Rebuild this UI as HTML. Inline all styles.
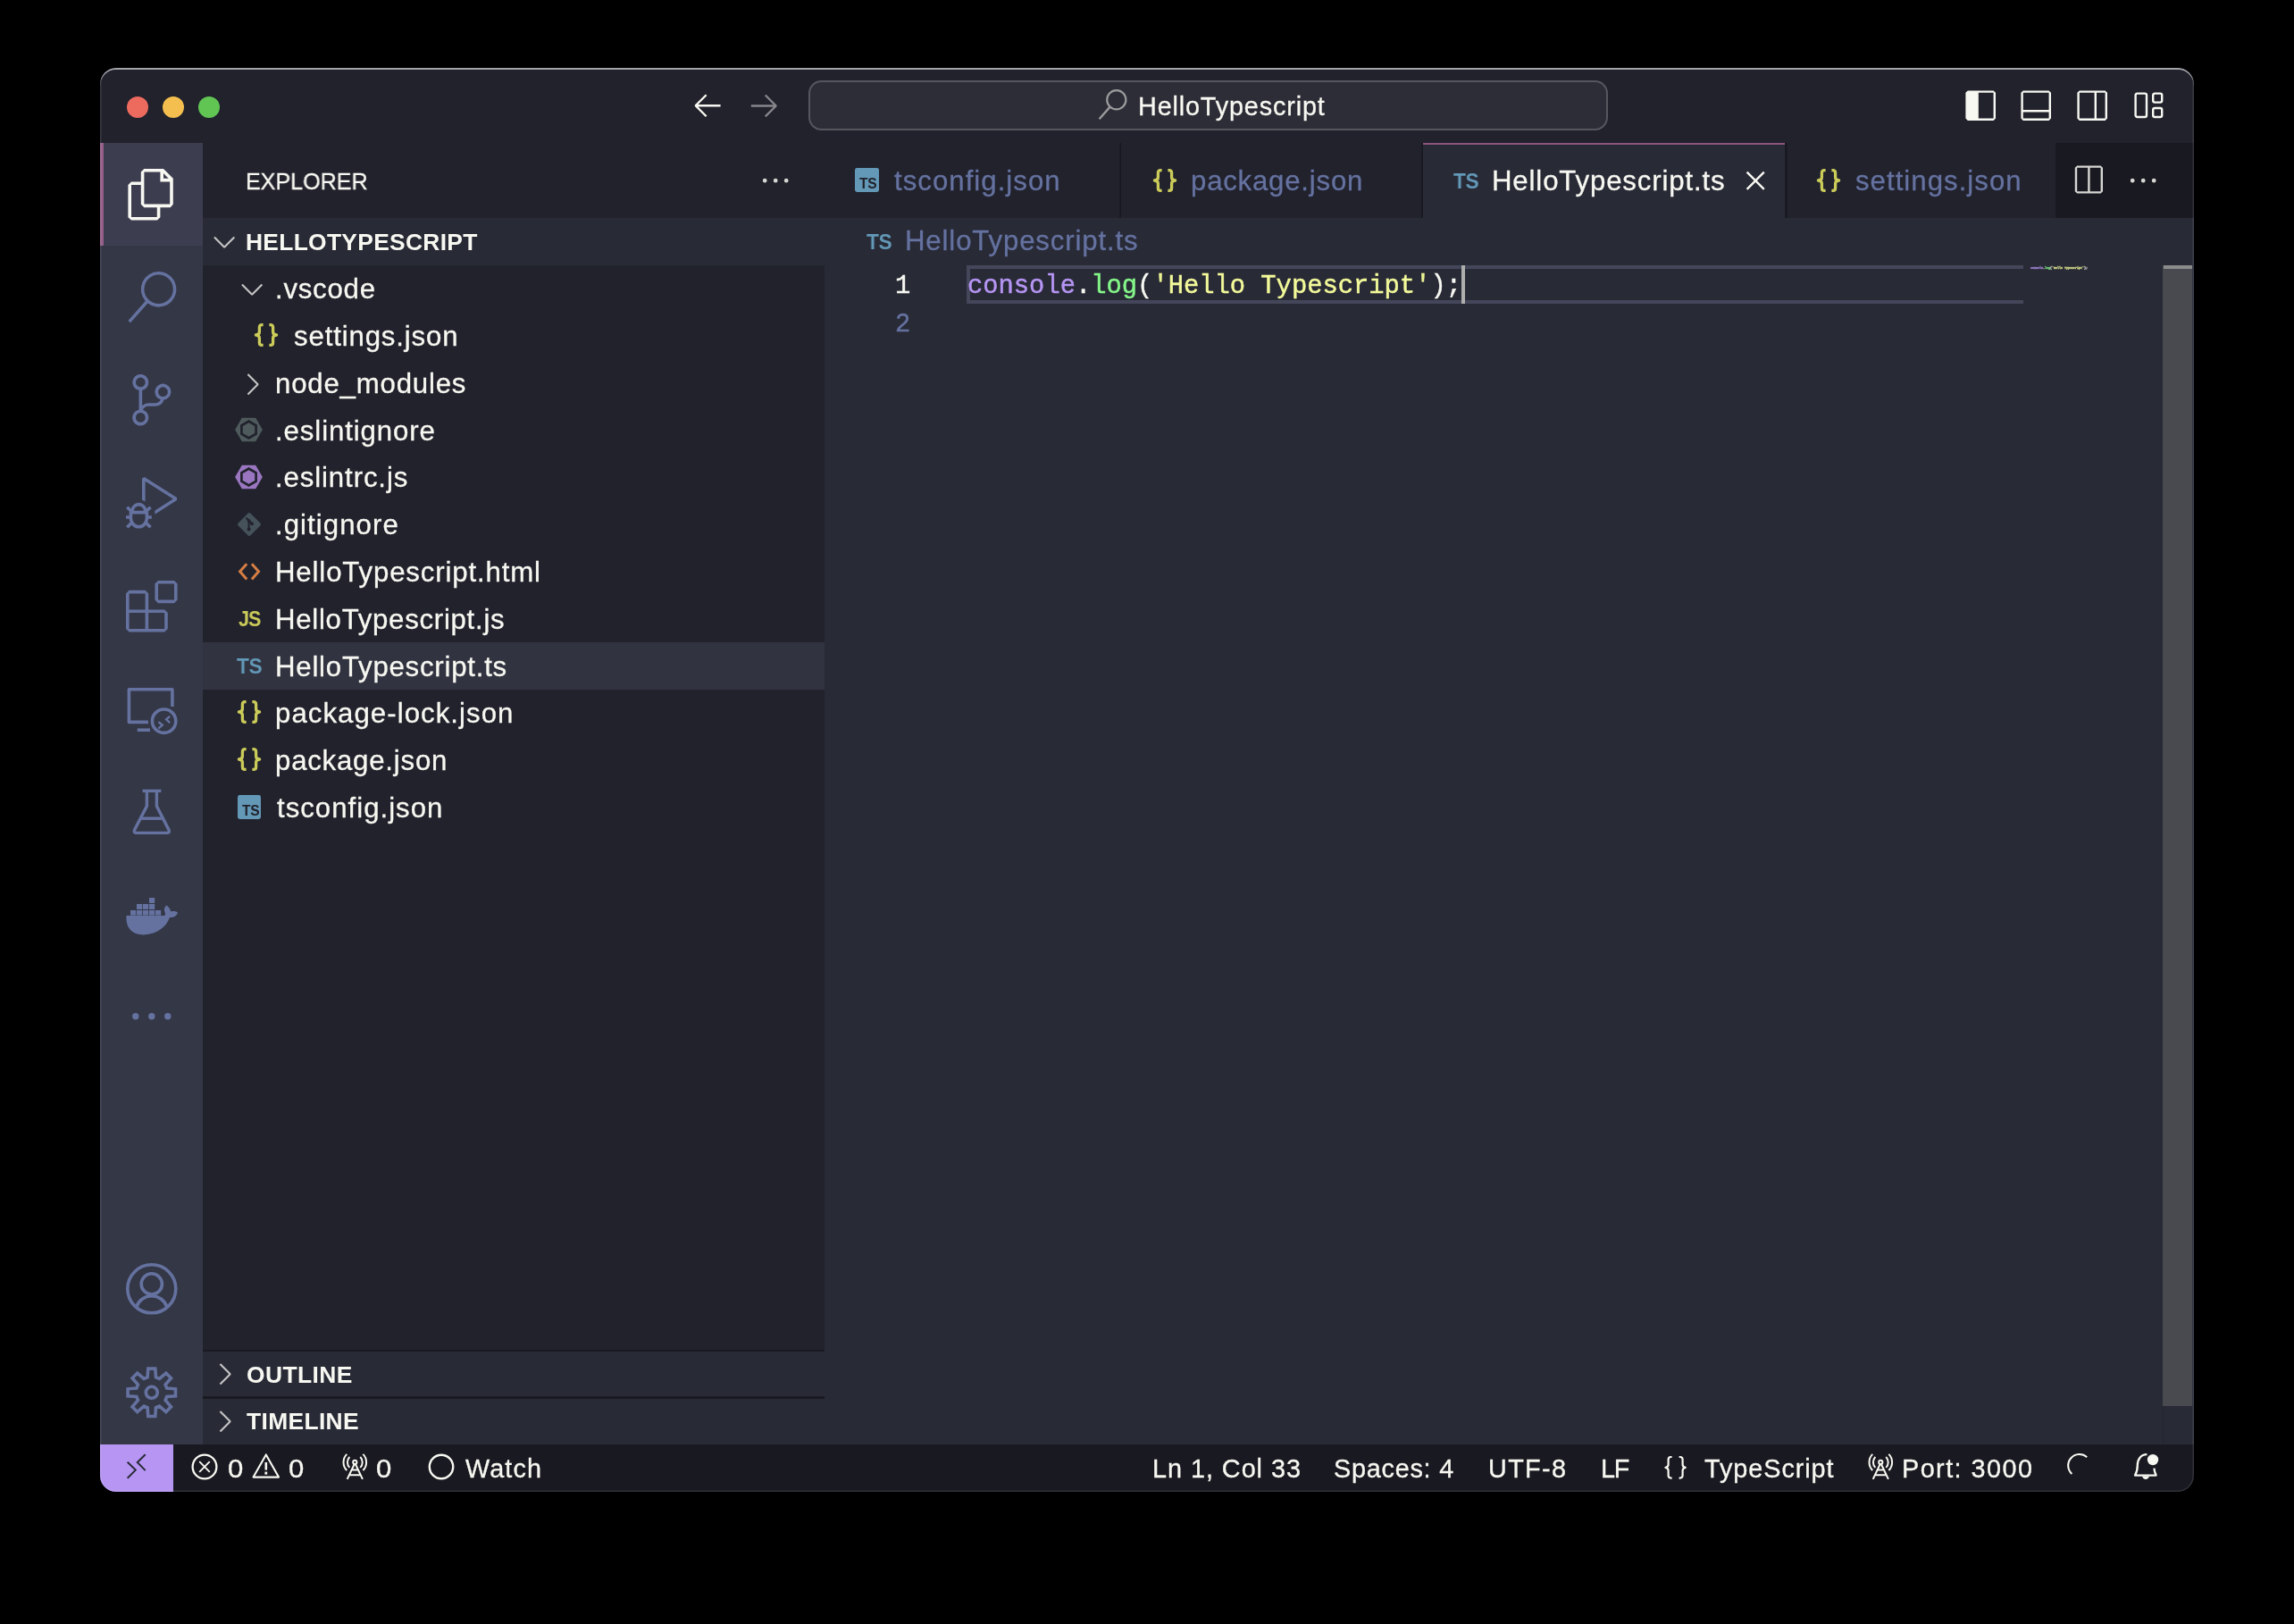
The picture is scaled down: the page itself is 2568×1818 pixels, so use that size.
<!DOCTYPE html>
<html>
<head>
<meta charset="utf-8">
<title>HelloTypescript.ts — HelloTypescript</title>
<style>
*{box-sizing:border-box;margin:0;padding:0}
html,body{width:2568px;height:1818px;background:#000;overflow:hidden}
body{font-family:"Liberation Sans",sans-serif;color:#f8f8f2;position:relative}
#win *{position:absolute}
#win{position:absolute;left:0;top:0;width:2568px;height:1818px;clip-path:inset(76px 112px 148px 112px round 18px)}
#titlebar{left:112px;top:76px;width:2344px;height:84px;background:#21222c}
#activity{left:112px;top:160px;width:115px;height:1457px;background:#343746}
#sidebar{left:227px;top:160px;width:696px;height:1457px;background:#21222c}
#editor{left:923px;top:160px;width:1533px;height:1457px;background:#282a36}
#status{left:112px;top:1617px;width:2344px;height:53px;background:#191a21}
svg{overflow:visible}
#win .t span{position:static}
.t{position:absolute;white-space:pre;line-height:0;margin-top:-0.3465em;font-size:31.2px;color:#f8f8f2;will-change:transform;-webkit-text-stroke:.3px}
.m{font-family:"Liberation Mono",monospace;font-size:28.8px;margin-top:-0.2667em;-webkit-text-stroke:.45px}
.s11{font-size:26.4px}
.s12{font-size:28.8px}
.b{font-weight:700;-webkit-text-stroke:0}
.dim{color:#6572a0}
.ic{position:absolute;width:38.4px;height:38.4px}
.ic24{position:absolute;width:57.6px;height:57.6px;fill:#6572a0}
</style>
</head>
<body>
<div id="win">
<div id="titlebar"></div>
<div id="activity"></div>
<div id="sidebar"></div>
<div id="editor"></div>
<div id="status"></div>
<!-- title bar -->
<div style="left:142px;top:108px;width:24px;height:24px;border-radius:50%;background:#ec6a5e"></div>
<div style="left:182px;top:108px;width:24px;height:24px;border-radius:50%;background:#f4bf4f"></div>
<div style="left:222px;top:108px;width:24px;height:24px;border-radius:50%;background:#61c554"></div>
<svg class="ic" style="left:773.4px;top:98.4px" viewBox="0 0 16 16"><path fill="#f8f8f2" d="M7 3.093l-5 5V8.8l5 5 .707-.707-4.146-4.147H14v-1H3.56L7.708 3.8 7 3.093z"/></svg>
<svg class="ic" style="left:836.4px;top:98.4px" viewBox="0 0 16 16"><path fill="#85858a" d="M9 13.887l5-5V8.18l-5-5-.707.707 4.146 4.147H2v1h10.44L8.292 13.18l.707.707z"/></svg>
<div style="left:905px;top:90px;width:895px;height:56px;border:2.4px solid #55565e;border-radius:14.4px;background:#2c2d36"></div>
<svg style="left:1228px;top:98px;width:36px;height:38px" viewBox="0 0 36 38"><circle cx="21.8" cy="13.8" r="10.6" fill="none" stroke="#9b9b9e" stroke-width="2.2"/><path d="M14.6 21.6L2.6 35.2" stroke="#9b9b9e" stroke-width="2.4" fill="none"/></svg>
<div class="t s12" style="left:1273.6px;top:129.2px;letter-spacing:0.85px;">HelloTypescript</div>
<svg class="ic" style="left:2197.6px;top:98.6px" viewBox="0 0 16 16"><path fill="#f8f8f2" d="M2 1L1 2v12l1 1h12l1-1V2l-1-1H2zm5 13V2h7v12H7z"/></svg>
<svg class="ic" style="left:2259.9px;top:98.6px" viewBox="0 0 16 16"><path fill="#f8f8f2" d="M2 1L1 2v12l1 1h12l1-1V2l-1-1H2zm0 9V2h12v8H2zm0 1h12v3H2v-3z"/></svg>
<svg class="ic" style="left:2322.6px;top:98.6px" viewBox="0 0 16 16"><path fill="#f8f8f2" d="M2 1L1 2v12l1 1h12l1-1V2l-1-1H2zm0 13V2h7v12H2zm8 0V2h4v12h-4z"/></svg>
<svg style="left:2388px;top:102px;width:34px;height:32px" viewBox="0 0 34 32"><g fill="none" stroke="#f8f8f2" stroke-width="2.4" stroke-linejoin="round"><rect x="2.6" y="2.6" width="12.4" height="26.4" rx="2"/><rect x="22.2" y="2.6" width="10" height="10" rx="2"/><rect x="22.2" y="19" width="10" height="10" rx="2"/></g></svg>
<!-- activity bar -->
<div style="left:112px;top:160px;width:115.2px;height:115.2px;background:#3d3d50"></div>
<div style="left:112px;top:160px;width:4.2px;height:115.2px;background:#955e89"></div>
<svg class="ic24" style="left:140.8px;top:188.8px;fill:#f8f8f2" viewBox="0 0 24 24"><path d="M17.5 0h-9L7 1.5V6H2.5L1 7.5v15.07L2.5 24h12.07L16 22.57V18h4.7l1.3-1.43V4.5L17.5 0zm0 2.12l2.38 2.38H17.5V2.12zm-3 20.38h-12v-15H7v9.07L8.5 18h6v4.5zm6-6h-12v-15H16V6h4.5v10.5z"/></svg>
<svg class="ic24" style="left:140.8px;top:304px" viewBox="0 0 24 24"><path d="M15.25 0a8.25 8.25 0 0 0-6.18 13.72L1 22.88l1.12 1 8.05-9.12A8.251 8.251 0 1 0 15.25.01V0zm0 15a6.75 6.75 0 1 1 0-13.5 6.75 6.75 0 0 1 0 13.5z"/></svg>
<svg class="ic24" style="left:140.8px;top:419.2px" viewBox="0 0 24 24"><path d="M21.007 8.222A3.738 3.738 0 0 0 15.045 5.2a3.737 3.737 0 0 0 1.156 6.583 2.988 2.988 0 0 1-2.668 1.67h-2.99a4.456 4.456 0 0 0-2.989 1.165V7.4a3.737 3.737 0 1 0-1.494 0v9.117a3.776 3.776 0 1 0 1.816.099 2.99 2.99 0 0 1 2.668-1.667h2.99a4.484 4.484 0 0 0 4.223-3.039 3.736 3.736 0 0 0 3.25-3.687zM4.565 3.738a2.242 2.242 0 1 1 4.484 0 2.242 2.242 0 0 1-4.484 0zm4.484 16.441a2.242 2.242 0 1 1-4.484 0 2.242 2.242 0 0 1 4.484 0zm8.221-9.715a2.242 2.242 0 1 1 0-4.485 2.242 2.242 0 0 1 0 4.485z"/></svg>
<svg class="ic24" style="left:140.8px;top:534.4px" viewBox="0 0 24 24"><path d="M10.94 13.5l-1.32 1.32a3.73 3.73 0 0 0-7.24 0L1.06 13.5 0 14.56l1.72 1.72-.22.22V18H0v1.5h1.5v.08c.077.489.214.966.41 1.42L0 22.94 1.06 24l1.65-1.65A4.308 4.308 0 0 0 6 24a4.31 4.31 0 0 0 3.29-1.65L10.94 24 12 22.94 10.09 21c.198-.464.336-.951.41-1.45v-.1H12V18h-1.5v-1.5l-.22-.22L12 14.56l-1.06-1.06zM6 13.5a2.25 2.25 0 0 1 2.25 2.25h-4.5A2.25 2.25 0 0 1 6 13.5zm3 6a3.33 3.33 0 0 1-3 3 3.33 3.33 0 0 1-3-3v-2.25h6v2.25zm14.76-9.9v1.26L13.5 17.37V15.6l8.5-5.37L9 2v9.46a5.07 5.07 0 0 0-1.5-.72V.63L8.64 0l15.12 9.6z"/></svg>
<svg class="ic24" style="left:140.8px;top:649.6px" viewBox="0 0 24 24"><path d="M13.5 1.5L15 0h7.5L24 1.5V9l-1.5 1.5H15L13.5 9V1.5zm1.5 0V9h7.5V1.5H15zM0 15V6l1.5-1.5H9L10.5 6v7.5H18l1.5 1.5v7.5L18 24H1.5L0 22.5V15zm9-1.5V6H1.5v7.5H9zM9 15H1.5v7.5H9V15zm1.5 7.5H18V15h-7.5v7.5z"/></svg>
<svg class="ic24" style="left:140.8px;top:764.8px;fill:none" viewBox="0 0 57.6 57.6"><g stroke="#6572a0" stroke-width="3.6" fill="none"><path d="M25 43.4H3.4V6.7H51.9V26" stroke-linejoin="round"/><path d="M12.7 52.2H27"/><circle cx="42.6" cy="42.2" r="13.2"/></g><g stroke="#6572a0" stroke-width="2.4" fill="none"><path d="M36.4 43.2L40.8 46.6L36.4 50.6"/><path d="M49.2 36.8L45 40.4L49.2 44.2"/></g></svg>
<svg class="ic24" style="left:140.8px;top:880px;fill:none" viewBox="0 0 57.6 57.6"><g stroke="#6572a0" stroke-width="3.4" fill="none" stroke-linejoin="round"><path d="M18.6 5.4H39.4"/><path d="M23.4 5.4V22.4L9.4 49.4Q8.6 52.4 11.6 52.4H46Q49 52.4 48.2 49.4L34.4 22.4V5.4"/><path d="M16.6 36.2H41.2"/></g></svg>
<svg class="ic24" style="left:140.8px;top:995.2px" viewBox="0 0 57.6 57.6"><g fill="#6572a0"><rect x="26" y="10" width="6.2" height="6"/><rect x="12" y="17" width="6.2" height="6"/><rect x="19" y="17" width="6.2" height="6"/><rect x="26" y="17" width="6.2" height="6"/><rect x="5" y="24" width="6.2" height="5.6"/><rect x="12" y="24" width="6.2" height="5.6"/><rect x="19" y="24" width="6.2" height="5.6"/><rect x="26" y="24" width="6.2" height="5.6"/><rect x="33" y="24" width="6.2" height="5.6"/><path d="M0.4 30H42.6C44.6 29.4 44.2 27.6 43.2 25.2C42.4 22.6 43.4 20 45.4 18.4C48.4 20.6 50 23.4 50 25.4C53 24.4 56.4 25 58 26.4C57 30 53.6 32.4 49 32C45.6 41.4 36 51 20 51.4C6 51.6 0 42.6 0.4 31.4Z"/></g></svg>
<svg class="ic24" style="left:140.8px;top:1110.4px" viewBox="0 0 57.6 57.6"><circle cx="10.8" cy="27.8" r="3.7"/><circle cx="28.8" cy="27.8" r="3.7"/><circle cx="46.8" cy="27.8" r="3.7"/></svg>
<svg class="ic24" style="left:140.8px;top:1414.4px;fill:none" viewBox="0 0 57.6 57.6"><g stroke="#6572a0" stroke-width="3.6" fill="none"><circle cx="28.8" cy="28.8" r="27"/><circle cx="28.8" cy="23.4" r="11.6"/><path d="M11.6 49.4A18 18 0 0 1 46 49.4"/></g></svg>
<svg class="ic24" style="left:140.8px;top:1529.6px;fill:none" viewBox="0 0 57.6 57.6"><g stroke="#6572a0" stroke-width="3.6" fill="none" stroke-linejoin="miter"><path d="M24.10 11.84 L24.81 2.10 L32.79 2.10 L33.50 11.84 L37.47 13.48 L44.86 7.10 L50.50 12.74 L44.12 20.13 L45.76 24.10 L55.50 24.81 L55.50 32.79 L45.76 33.50 L44.12 37.47 L50.50 44.86 L44.86 50.50 L37.47 44.12 L33.50 45.76 L32.79 55.50 L24.81 55.50 L24.10 45.76 L20.13 44.12 L12.74 50.50 L7.10 44.86 L13.48 37.47 L11.84 33.50 L2.10 32.79 L2.10 24.81 L11.84 24.10 L13.48 20.13 L7.10 12.74 L12.74 7.10 L20.13 13.48Z"/><circle cx="28.8" cy="28.8" r="6.5"/></g></svg>
<!-- sidebar -->
<div class="t s11" style="left:274.6px;top:212px;letter-spacing:0px;transform:scaleX(.95);transform-origin:0 0">EXPLORER</div>
<svg class="ic" style="left:848.6px;top:182.8px" viewBox="0 0 16 16"><path fill="#d6d6d3" d="M4 8a1 1 0 1 1-2 0 1 1 0 0 1 2 0zm5 0a1 1 0 1 1-2 0 1 1 0 0 1 2 0zm5 0a1 1 0 1 1-2 0 1 1 0 0 1 2 0z"/></svg>
<div style="left:227px;top:244px;width:696px;height:53px;background:#282a36"></div>
<svg class="ic" style="left:231.9px;top:251px" viewBox="0 0 16 16"><path fill="#c5c5c5" d="M7.976 10.072l4.357-4.357.62.618L8.284 11h-.618L3 6.333l.619-.618 4.357 4.357z"/></svg>
<div class="t s11 b" style="left:274.8px;top:279.8px;letter-spacing:0.3px;">HELLOTYPESCRIPT</div>
<div style="left:227px;top:719px;width:696px;height:52.8px;background:#313340"></div>
<div class="t " style="left:308.4px;top:334.9px;letter-spacing:0.75px;">.vscode</div>
<div class="t " style="left:328.6px;top:387.7px;letter-spacing:0.85px;">settings.json</div>
<div class="t " style="left:308.4px;top:440.5px;letter-spacing:0.8px;">node_modules</div>
<div class="t " style="left:308.4px;top:493.3px;letter-spacing:0.9px;">.eslintignore</div>
<div class="t " style="left:308.4px;top:546.1px;letter-spacing:0.88px;">.eslintrc.js</div>
<div class="t " style="left:308.4px;top:598.9px;letter-spacing:1.05px;">.gitignore</div>
<div class="t " style="left:308.4px;top:651.7px;letter-spacing:0.85px;">HelloTypescript.html</div>
<div class="t " style="left:308.4px;top:704.5px;letter-spacing:0.72px;">HelloTypescript.js</div>
<div class="t " style="left:308.4px;top:757.3px;letter-spacing:0.77px;">HelloTypescript.ts</div>
<div class="t " style="left:308.4px;top:810.1px;letter-spacing:1.05px;">package-lock.json</div>
<div class="t " style="left:308.4px;top:862.9px;letter-spacing:0.78px;">package.json</div>
<div class="t " style="left:309.6px;top:915.7px;letter-spacing:1.0px;">tsconfig.json</div>
<svg class="ic" style="left:263.1px;top:304.1px" viewBox="0 0 16 16"><path fill="#c5c5c5" d="M7.976 10.072l4.357-4.357.62.618L8.284 11h-.618L3 6.333l.619-.618 4.357 4.357z"/></svg>
<svg style="left:284.3px;top:360.99999999999994px;width:28px;height:28px" viewBox="0 0 28 28"><g fill="none" stroke="#cbcb5a" stroke-width="3.3" stroke-linejoin="round"><path d="M10.6 2.6H9.2Q6.4 2.6 6.4 5.6V10.4Q6.4 13.6 2.4 14Q6.4 14.4 6.4 17.6V22.4Q6.4 25.4 9.2 25.4H10.6"/><path d="M17.4 2.6H18.8Q21.6 2.6 21.6 5.6V10.4Q21.6 13.6 25.6 14Q21.6 14.4 21.6 17.6V22.4Q21.6 25.4 18.8 25.4H17.4"/></g></svg>
<svg class="ic" style="left:262.9px;top:410.6px" viewBox="0 0 16 16"><path fill="#c5c5c5" d="M10.072 8.024L5.715 3.667l.618-.62L11 7.716v.618L6.333 13l-.618-.619 4.357-4.357z"/></svg>
<svg style="left:263.1px;top:466.69999999999993px;width:31px;height:28px" viewBox="0 0 31 28"><polygon points="30.90,14.00 23.20,27.34 7.80,27.34 0.10,14.00 7.80,0.66 23.20,0.66" fill="#4f5a5d"/><polygon points="24.94,19.45 15.50,24.90 6.06,19.45 6.06,8.55 15.50,3.10 24.94,8.55" fill="#21222c"/><polygon points="22.25,17.90 15.50,21.80 8.75,17.90 8.75,10.10 15.50,6.20 22.25,10.10" fill="#4f5a5d"/></svg>
<svg style="left:263.1px;top:519.4999999999999px;width:31px;height:28px" viewBox="0 0 31 28"><polygon points="30.90,14.00 23.20,27.34 7.80,27.34 0.10,14.00 7.80,0.66 23.20,0.66" fill="#9976bf"/><polygon points="24.94,19.45 15.50,24.90 6.06,19.45 6.06,8.55 15.50,3.10 24.94,8.55" fill="#21222c"/><polygon points="22.25,17.90 15.50,21.80 8.75,17.90 8.75,10.10 15.50,6.20 22.25,10.10" fill="#9976bf"/></svg>
<svg style="left:265px;top:573.0px;width:28px;height:28px" viewBox="0 0 28 28"><rect x="4.2" y="4.2" width="19.6" height="19.6" rx="2.2" fill="#45525a" transform="rotate(45 14 14)"/><g stroke="#21222c" stroke-width="2" fill="none"><path d="M10.4 6.6L16.4 12.6"/><path d="M13.6 10.2V19.4"/></g><circle cx="13.6" cy="19.6" r="2" fill="#21222c"/><circle cx="17" cy="13.2" r="2" fill="#21222c"/><circle cx="13.6" cy="10" r="1.9" fill="#21222c"/></svg>
<svg style="left:266.2px;top:628.9999999999999px;width:26px;height:22px" viewBox="0 0 26 22"><g fill="none" stroke="#d57e44" stroke-width="3"><path d="M10.2 2.3L2.6 10.8L10.2 19.4"/><path d="M15.9 2.3L23.5 10.8L15.9 19.4"/></g></svg>
<div class="t b" style="left:266.6px;top:701.6px;letter-spacing:-1px;font-size:24.4px;color:#cbcb5a;transform:scaleX(.88);transform-origin:0 0">JS</div>
<div class="t b" style="left:264.6px;top:754.4px;letter-spacing:-0.4px;font-size:24.4px;color:#6398b7;transform:scaleX(.93);transform-origin:0 0">TS</div>
<svg style="left:265.09999999999997px;top:783.3999999999999px;width:28px;height:28px" viewBox="0 0 28 28"><g fill="none" stroke="#cbcb5a" stroke-width="3.3" stroke-linejoin="round"><path d="M10.6 2.6H9.2Q6.4 2.6 6.4 5.6V10.4Q6.4 13.6 2.4 14Q6.4 14.4 6.4 17.6V22.4Q6.4 25.4 9.2 25.4H10.6"/><path d="M17.4 2.6H18.8Q21.6 2.6 21.6 5.6V10.4Q21.6 13.6 25.6 14Q21.6 14.4 21.6 17.6V22.4Q21.6 25.4 18.8 25.4H17.4"/></g></svg>
<svg style="left:265.09999999999997px;top:836.1999999999999px;width:28px;height:28px" viewBox="0 0 28 28"><g fill="none" stroke="#cbcb5a" stroke-width="3.3" stroke-linejoin="round"><path d="M10.6 2.6H9.2Q6.4 2.6 6.4 5.6V10.4Q6.4 13.6 2.4 14Q6.4 14.4 6.4 17.6V22.4Q6.4 25.4 9.2 25.4H10.6"/><path d="M17.4 2.6H18.8Q21.6 2.6 21.6 5.6V10.4Q21.6 13.6 25.6 14Q21.6 14.4 21.6 17.6V22.4Q21.6 25.4 18.8 25.4H17.4"/></g></svg>
<div style="left:265.8px;top:890.2px;width:26.6px;height:26.6px;background:#6398b7;border-radius:2.4px"></div>
<div class="t b" style="left:270.6px;top:913.6px;letter-spacing:-0.2px;font-size:15.6px;color:#21222c">TS</div>
<div style="left:227px;top:1510.6px;width:696px;height:106.4px;background:#282a36"></div>
<div style="left:227px;top:1510.6px;width:696px;height:2.4px;background:#191a21"></div>
<div style="left:227px;top:1563.2px;width:696px;height:2.4px;background:#191a21"></div>
<svg class="ic" style="left:231.9px;top:1518.8px" viewBox="0 0 16 16"><path fill="#c5c5c5" d="M10.072 8.024L5.715 3.667l.618-.62L11 7.716v.618L6.333 13l-.618-.619 4.357-4.357z"/></svg>
<svg class="ic" style="left:231.9px;top:1572.2px" viewBox="0 0 16 16"><path fill="#c5c5c5" d="M10.072 8.024L5.715 3.667l.618-.62L11 7.716v.618L6.333 13l-.618-.619 4.357-4.357z"/></svg>
<div class="t s11 b" style="left:275.6px;top:1547.8px;letter-spacing:0.42px;">OUTLINE</div>
<div class="t s11 b" style="left:276.4px;top:1600.4px;letter-spacing:0.35px;">TIMELINE</div>
<!-- tabs -->
<div style="left:923px;top:160px;width:1533px;height:84px;background:#21222c"></div>
<div style="left:2301px;top:160px;width:155px;height:84px;background:#191a21"></div>
<div style="left:1593.4px;top:160px;width:404.8px;height:84px;background:#282a36"></div>
<div style="left:1593.4px;top:160px;width:404.8px;height:2.4px;background:#8b557c"></div>
<div style="left:1252.6px;top:160px;width:2.4px;height:84px;background:#191a21"></div>
<div style="left:1591px;top:160px;width:2.4px;height:84px;background:#191a21"></div>
<div style="left:1998.2px;top:160px;width:2.4px;height:84px;background:#191a21"></div>
<div style="left:957.2px;top:188.2px;width:26.8px;height:26.8px;background:#6398b7;border-radius:2.4px"></div>
<div class="t b" style="left:962.0px;top:211.8px;letter-spacing:-0.2px;font-size:15.6px;color:#21222c">TS</div>
<div class="t dim" style="left:1001px;top:213.8px;letter-spacing:1.02px;">tsconfig.json</div>
<svg style="left:1289.7px;top:187.9px;width:28px;height:28px" viewBox="0 0 28 28"><g fill="none" stroke="#cbcb5a" stroke-width="3.3" stroke-linejoin="round"><path d="M10.6 2.6H9.2Q6.4 2.6 6.4 5.6V10.4Q6.4 13.6 2.4 14Q6.4 14.4 6.4 17.6V22.4Q6.4 25.4 9.2 25.4H10.6"/><path d="M17.4 2.6H18.8Q21.6 2.6 21.6 5.6V10.4Q21.6 13.6 25.6 14Q21.6 14.4 21.6 17.6V22.4Q21.6 25.4 18.8 25.4H17.4"/></g></svg>
<div class="t dim" style="left:1333px;top:213.8px;letter-spacing:0.78px;">package.json</div>
<div class="t b" style="left:1626.6px;top:211.4px;letter-spacing:-0.4px;font-size:24.4px;color:#6398b7;transform:scaleX(.93);transform-origin:0 0">TS</div>
<div class="t " style="left:1670.4px;top:213.8px;letter-spacing:0.85px;">HelloTypescript.ts</div>
<svg class="ic" style="left:1945.8px;top:182.8px" viewBox="0 0 16 16"><path fill="#f8f8f2" d="M8 8.707l3.646 3.647.708-.707L8.707 8l3.647-3.646-.707-.708L8 7.293 4.354 3.646l-.707.708L7.293 8l-3.646 3.646.707.708L8 8.707z"/></svg>
<svg style="left:2033.1000000000001px;top:187.9px;width:28px;height:28px" viewBox="0 0 28 28"><g fill="none" stroke="#cbcb5a" stroke-width="3.3" stroke-linejoin="round"><path d="M10.6 2.6H9.2Q6.4 2.6 6.4 5.6V10.4Q6.4 13.6 2.4 14Q6.4 14.4 6.4 17.6V22.4Q6.4 25.4 9.2 25.4H10.6"/><path d="M17.4 2.6H18.8Q21.6 2.6 21.6 5.6V10.4Q21.6 13.6 25.6 14Q21.6 14.4 21.6 17.6V22.4Q21.6 25.4 18.8 25.4H17.4"/></g></svg>
<div class="t dim" style="left:2077px;top:213.8px;letter-spacing:1.02px;">settings.json</div>
<svg class="ic" style="left:2317.8px;top:182.6px" viewBox="0 0 16 16"><path fill="#d6d6d3" d="M14 1H3L2 2v11l1 1h11l1-1V2l-1-1zM8 13H3V2h5v11zm6 0H9V2h5v11z"/></svg>
<svg class="ic" style="left:2380.2px;top:182.8px" viewBox="0 0 16 16"><path fill="#d6d6d3" d="M4 8a1 1 0 1 1-2 0 1 1 0 0 1 2 0zm5 0a1 1 0 1 1-2 0 1 1 0 0 1 2 0zm5 0a1 1 0 1 1-2 0 1 1 0 0 1 2 0z"/></svg>
<div class="t b" style="left:970.2px;top:279.2px;letter-spacing:-0.4px;font-size:24.4px;color:#6398b7;transform:scaleX(.93);transform-origin:0 0">TS</div>
<div class="t dim" style="left:1013.4px;top:281.2px;letter-spacing:0.85px;">HelloTypescript.ts</div>
<!-- editor -->
<div style="left:1082px;top:297px;width:1183px;height:43px;border:4px solid #44475a;border-right:0"></div>
<div class="t m" style="left:1002.1px;top:328.2px;letter-spacing:0px;">1</div>
<div class="t m" style="left:1002.1px;top:371.4px;letter-spacing:0px;color:#6572a0">2</div>
<div class="t m" style="left:1083.2px;top:328.2px;letter-spacing:0px;"><span style="color:#b695f3">console</span>.<span style="color:#85f789">log</span>(<span style="color:#ebf292">'</span><span style="color:#f3fa9a">Hello Typescript</span><span style="color:#ebf292">'</span>);</div>
<div style="left:1636px;top:297px;width:4px;height:43px;background:#aeafad"></div>
<div class="t m b" style="left:2273px;top:300.6px;font-size:28.8px;transform:scale(.1157,.135);transform-origin:0 7.68px;opacity:.85;-webkit-text-stroke:2.5px"><span style="color:#b695f3">console</span>.<span style="color:#85f789">log</span>(<span style="color:#ebf292">'</span><span style="color:#f3fa9a">Hello Typescript</span><span style="color:#ebf292">'</span>);</div>
<div style="left:2421.4px;top:297px;width:33px;height:1277px;background:#494a50"></div>
<div style="left:2422px;top:297px;width:32.4px;height:4.2px;background:#8a8b8b"></div>
<div style="left:2421px;top:1574px;width:1.2px;height:43px;background:#24252f"></div>
<!-- status bar -->
<div style="left:112px;top:1617px;width:81.8px;height:53px;background:#b695f3"></div>
<svg style="left:140px;top:1626px;width:26px;height:32px" viewBox="0 0 26 32"><g fill="none" stroke="#282a36" stroke-width="2"><path d="M2.7 10.7L11.8 19.6L2.7 28.8"/><path d="M22.7 2.3L13.8 11L22.7 20.1"/></g></svg>
<svg style="left:214.4px;top:1627.2px;width:30px;height:30px" viewBox="0 0 30 30"><g fill="none" stroke="#f8f8f2" stroke-width="2.3"><circle cx="15" cy="15" r="13.4"/><path d="M9.2 9.2L20.8 20.8M20.8 9.2L9.2 20.8" stroke-width="1.9"/></g></svg>
<div class="t s12" style="left:255.2px;top:1654.2px;letter-spacing:0px;transform:scaleX(1.08);transform-origin:0 0">0</div>
<svg style="left:282px;top:1626px;width:32px;height:30px" viewBox="0 0 32 30"><g fill="none" stroke="#f8f8f2" stroke-width="2.1" stroke-linejoin="round"><path d="M15.8 2.4L30 27.6H1.6Z"/><path d="M15.8 11V19.6" stroke-width="2.6"/><path d="M15.8 21.6V24.6" stroke-width="2.8"/></g></svg>
<div class="t s12" style="left:322.8px;top:1654.2px;letter-spacing:0px;transform:scaleX(1.08);transform-origin:0 0">0</div>
<svg style="left:382.9px;top:1627px;width:30px;height:30px" viewBox="0 0 30 30"><g fill="none" stroke="#f8f8f2" stroke-width="2"><circle cx="14.3" cy="9.9" r="2.1"/><path d="M13.6 12.2L5.7 28.9M15 12.2L22.9 28.9M10.9 18.5H17.7M8.2 24.3H20.4"/><path d="M8.36 3.96A8.4 8.4 0 0 0 8.36 15.84M20.24 3.96A8.4 8.4 0 0 1 20.24 15.84"/><path d="M5.25 .85A12.8 12.8 0 0 0 5.25 18.95M23.35 .85A12.8 12.8 0 0 1 23.35 18.95"/></g></svg>
<div class="t s12" style="left:421px;top:1654.2px;letter-spacing:0px;transform:scaleX(1.08);transform-origin:0 0">0</div>
<svg style="left:479px;top:1627px;width:30px;height:30px" viewBox="0 0 30 30"><circle cx="15" cy="15" r="13.2" fill="none" stroke="#f8f8f2" stroke-width="2.4"/></svg>
<div class="t s12" style="left:520.8px;top:1654.2px;letter-spacing:1.1px;">Watch</div>
<div class="t s12" style="left:1289.6px;top:1654.2px;letter-spacing:0.97px;">Ln 1, Col 33</div>
<div class="t s12" style="left:1493.2px;top:1654.2px;letter-spacing:0.76px;">Spaces: 4</div>
<div class="t s12" style="left:1666px;top:1654.2px;letter-spacing:1.35px;">UTF-8</div>
<div class="t s12" style="left:1791.6px;top:1654.2px;letter-spacing:-1.2px;">LF</div>
<svg style="left:1862px;top:1629px;width:28px;height:28px" viewBox="0 0 28 28"><g fill="none" stroke="#f8f8f2" stroke-width="2.2" stroke-linejoin="round"><path d="M9.6 2H8.4Q5.6 2 5.6 5V10.4Q5.6 13.2 2.4 13.8Q5.6 14.4 5.6 17.2V22.6Q5.6 25.6 8.4 25.6H9.6"/><path d="M17.6 2H18.8Q21.6 2 21.6 5V10.4Q21.6 13.2 24.8 13.8Q21.6 14.4 21.6 17.2V22.6Q21.6 25.6 18.8 25.6H17.6"/></g></svg>
<div class="t s12" style="left:1908px;top:1654.2px;letter-spacing:0.95px;">TypeScript</div>
<svg style="left:2090.8px;top:1627px;width:30px;height:30px" viewBox="0 0 30 30"><g fill="none" stroke="#f8f8f2" stroke-width="2"><circle cx="14.3" cy="9.9" r="2.1"/><path d="M13.6 12.2L5.7 28.9M15 12.2L22.9 28.9M10.9 18.5H17.7M8.2 24.3H20.4"/><path d="M8.36 3.96A8.4 8.4 0 0 0 8.36 15.84M20.24 3.96A8.4 8.4 0 0 1 20.24 15.84"/><path d="M5.25 .85A12.8 12.8 0 0 0 5.25 18.95M23.35 .85A12.8 12.8 0 0 1 23.35 18.95"/></g></svg>
<div class="t s12" style="left:2128.8px;top:1654.2px;letter-spacing:1.45px;">Port: 3000</div>
<svg style="left:2313px;top:1627px;width:30px;height:30px" viewBox="0 0 30 30"><path d="M23.2 4.2A12.6 12.6 0 0 0 6.4 23" fill="none" stroke="#f8f8f2" stroke-width="2.1"/></svg>
<svg style="left:2386px;top:1624px;width:34px;height:36px" viewBox="0 0 34 36"><g fill="none" stroke="#f8f8f2" stroke-width="2.3" stroke-linejoin="round"><path d="M17.4 4.2C10.6 4.2 6.8 9.4 6.8 16.2C6.8 21 5.6 24.8 4 27.6H27.6C26.6 25.4 25.6 22.6 25.4 19.6"/></g><path d="M12 28.6A4.2 5 0 0 0 20 28.6Z" fill="#f8f8f2"/><circle cx="24" cy="10.1" r="6.2" fill="#f8f8f2"/></svg>
<div style="left:112px;top:76px;width:2344px;height:1594px;border-radius:18px;box-shadow:inset 0 2px 0 0 rgba(200,200,205,.75), inset 0 0 0 1.5px rgba(255,255,255,.11);pointer-events:none"></div>
</div>
</body>
</html>
